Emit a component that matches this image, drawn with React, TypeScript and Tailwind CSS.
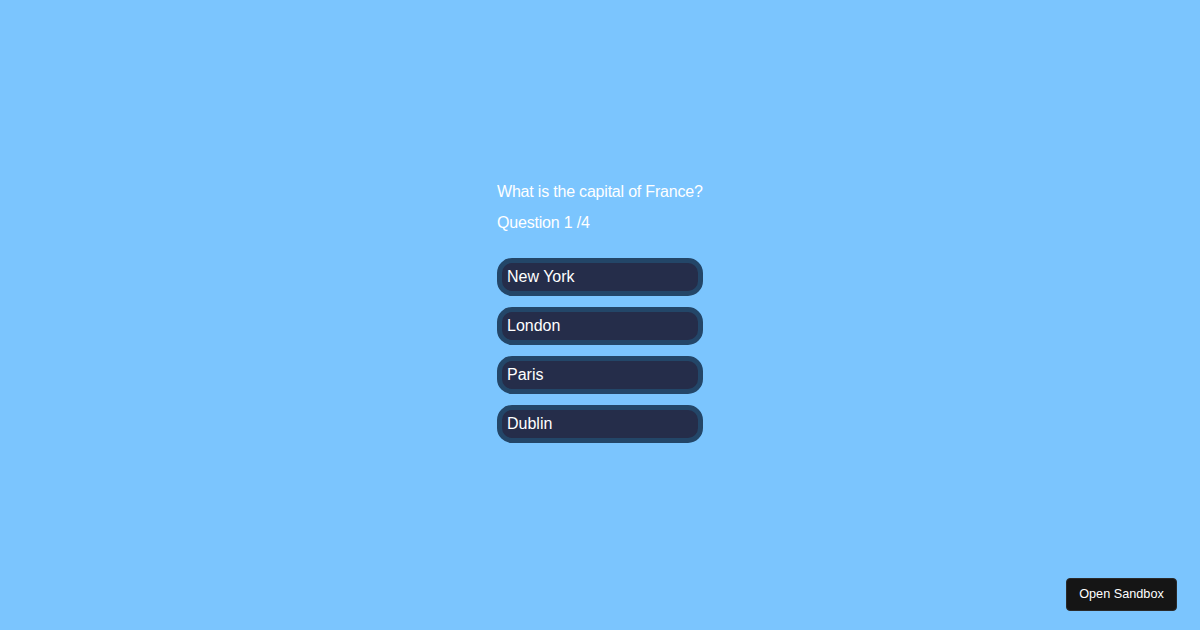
import { useState } from 'react';

const QUESTIONS = [
  {
    text: 'What is the capital of France?',
    answers: ['New York', 'London', 'Paris', 'Dublin'],
  },
  { text: 'Who is CEO of Tesla?', answers: ['Jeff Bezos', 'Elon Musk', 'Bill Gates', 'Tony Stark'] },
  { text: 'The iPhone was created by which company?', answers: ['Apple', 'Intel', 'Amazon', 'Microsoft'] },
  { text: 'How many Harry Potter books are there?', answers: ['1', '4', '6', '7'] },
];

export default function App() {
  const [current, setCurrent] = useState(0);
  const q = QUESTIONS[current];

  return (
    <main
      className="relative min-h-screen h-[630px] bg-[#7bc5fe] flex items-center justify-center text-white"
      style={{ fontFamily: '"Liberation Sans", Arial, sans-serif' }}
    >
      <div className="flex flex-col w-[206px] mt-[-5px]">
        <div className="text-base leading-[18px] tracking-[-0.2px] whitespace-nowrap">{q.text}</div>
        <div className="text-base leading-[18px] tracking-[-0.2px] mt-[13px] mb-[26px]">
          Question {current + 1} /{QUESTIONS.length}
        </div>
        <div className="flex flex-col gap-[11px]">
          {q.answers.map((a) => (
            <button
              key={a}
              onClick={() => setCurrent((c) => (c + 1) % QUESTIONS.length)}
              className="w-full text-left text-base leading-[18px] text-white bg-[#252d4a] border-[5px] border-[#234668] rounded-[15px] p-[5px] cursor-pointer"
            >
              {a}
            </button>
          ))}
        </div>
      </div>

      {/* floating link in the corner */}
      <button className="absolute right-[23px] bottom-[19px] w-[111px] bg-[#151515] text-white text-[12.7px] rounded-[4px] h-[33px] border border-[#2a2a2a]">
        Open Sandbox
      </button>
    </main>
  );
}
